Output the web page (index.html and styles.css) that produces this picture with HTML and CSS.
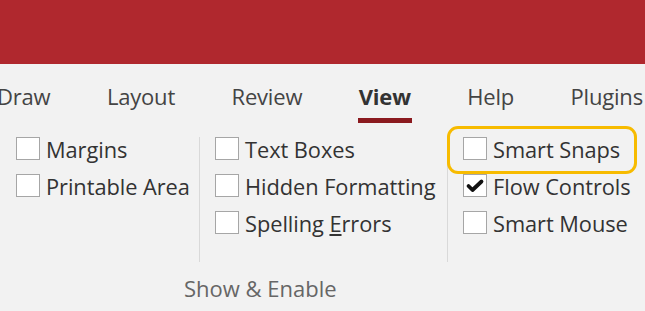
FILE: index.html
```html
<!DOCTYPE html>
<html>
<head>
<meta charset="utf-8">
<link rel="stylesheet" href="styles.css">
</head>
<body>
<div class="titlebar"></div>
<nav class="tabs">
  <span class="tab">Draw</span>
  <span class="tab">Layout</span>
  <span class="tab">Review</span>
  <span class="tab active">View</span>
  <span class="tab">Help</span>
  <span class="tab">Plugins</span>
</nav>
<section class="group">
  <div class="columns">
    <div class="col col1">
      <label class="item"><span class="box"></span><span class="text">Margins</span></label>
      <label class="item"><span class="box"></span><span class="text">Printable Area</span></label>
    </div>
    <div class="sep"></div>
    <div class="col col2">
      <label class="item"><span class="box"></span><span class="text">Text Boxes</span></label>
      <label class="item"><span class="box"></span><span class="text">Hidden Formatting</span></label>
      <label class="item"><span class="box"></span><span class="text">Spelling <u>E</u>rrors</span></label>
    </div>
    <div class="sep"></div>
    <div class="col col3">
      <label class="item"><span class="box"></span><span class="text">Smart Snaps</span><span class="ring"></span></label>
      <label class="item"><span class="box"><svg viewBox="0 0 24 23" width="24" height="23"><path d="M5.5 12 L9.5 16 L18.5 7.5" fill="none" stroke="#111" stroke-width="3.8" stroke-linecap="round" stroke-linejoin="round"/></svg></span><span class="text">Flow Controls</span></label>
      <label class="item"><span class="box"></span><span class="text">Smart Mouse</span></label>
    </div>
  </div>
  <div class="group-label">Show &amp; Enable</div>
</section>
</body>
</html>
```

FILE: styles.css
```css
html, body {
  margin: 0;
  padding: 0;
}
body {
  background: #f2f2f2;
  font-family: "Open Sans", "Noto Sans", sans-serif;
  color: #333;
  width: 645px;
  height: 311px;
  overflow: hidden;
}
.titlebar {
  height: 64px;
  background: #b0282e;
}
.tabs {
  display: flex;
  gap: 56.5px;
  margin-left: -3px;
  height: 60px;
  white-space: nowrap;
}
.tab {
  position: relative;
  font-size: 22px;
  color: #444;
  line-height: 22px;
  padding-top: 21px;
  letter-spacing: -0.2px;
  flex: none;
}
.tab.active {
  font-weight: 700;
  color: #333;
}
.tab.active::after {
  content: "";
  position: absolute;
  left: -1px;
  right: -1px;
  top: 54px;
  height: 5px;
  background: #8b1a1f;
}
.group {
  padding-top: 13px;
}
.columns {
  display: flex;
  height: 125px;
}
.col {
  box-sizing: border-box;
  display: flex;
  flex-direction: column;
  gap: 14px;
  flex: none;
}
.col1 {
  width: 199px;
  padding-left: 16px;
}
.col2 {
  width: 247px;
  padding-left: 15px;
}
.col3 {
  padding-left: 15px;
}
.sep {
  width: 1px;
  flex: none;
  background: #d9d9d9;
  height: 125px;
}
.item {
  position: relative;
  display: flex;
  align-items: center;
  height: 23px;
  font-size: 21.8px;
  white-space: nowrap;
  letter-spacing: -0.05px;
}
.text {
  white-space: pre;
  padding-top: 2px;
}
.box {
  box-sizing: border-box;
  width: 24px;
  height: 23px;
  border: 1px solid #a6a6a6;
  background: #fff;
  margin-right: 6px;
  flex: none;
  display: flex;
}
.box svg {
  margin: -1px;
}
.ring {
  position: absolute;
  left: -16px;
  top: -11px;
  width: 190px;
  height: 48px;
  box-sizing: border-box;
  border: 3px solid #f7bb00;
  border-radius: 11px;
}
.group-label {
  margin-top: 11px;
  padding-left: 184px;
  font-size: 22px;
  color: #666;
}
```
